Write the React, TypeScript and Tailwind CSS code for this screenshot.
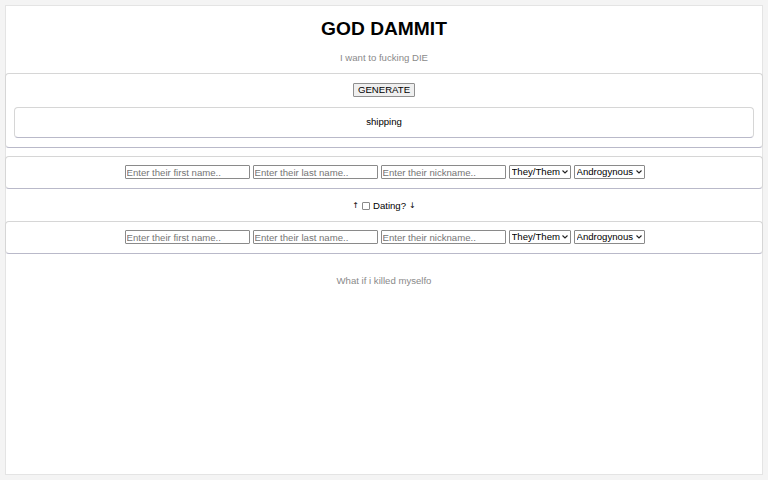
import React from "react";

function Select({ label, w }: { label: string; w: string }) {
  return (
    <span className={`relative inline-flex ${w}`}>
      <select className="appearance-none w-full h-[14px] border border-[#8a8a8a] rounded-[1px] bg-white text-[9.6px] leading-[12px] text-black pl-[2px] pr-[9px]">
        <option>{label}</option>
      </select>
      <svg
        className="pointer-events-none absolute right-[3px] top-[5px]"
        width="6"
        height="4"
        viewBox="0 0 6 4"
      >
        <path d="M0.5 0.5 L3 3 L5.5 0.5" fill="none" stroke="#222" strokeWidth="1.1" />
      </svg>
    </span>
  );
}

function PersonRow() {
  const inputCls =
    "w-[125px] h-[14px] border border-[#8a8a8a] rounded-[1px] bg-white px-[1px] text-[9.6px] leading-[12px] text-black placeholder:text-[#757575] outline-none";
  return (
    <div className="flex justify-center items-center gap-[3px] pl-[1px]">
      <input className={inputCls} placeholder="Enter their first name.." />
      <input className={inputCls} placeholder="Enter their last name.." />
      <input className={inputCls} placeholder="Enter their nickname.." />
      <Select label="They/Them" w="w-[62px]" />
      <Select label="Androgynous" w="w-[71px]" />
    </div>
  );
}

export default function App() {
  return (
    <div
      className="min-h-[480px] bg-[#f4f4f4] p-[5px]"
      style={{ fontFamily: '"Liberation Sans", Arial, sans-serif' }}
    >
      <div className="h-[470px] bg-white border border-[#e4e4e4] flex flex-col">
        <h1 className="mt-[11px] h-[24px] leading-[24px] text-center text-[19.2px] font-bold text-black">
          GOD DAMMIT
        </h1>
        <p className="mt-[11px] h-[12px] leading-[12px] text-center text-[9.6px] text-[#8a8a8a]">
          I want to fucking DIE
        </p>
        <div className="mt-[9px] -mx-px border border-[#d6d6d6] border-b-[#b9b9c9] rounded-[4px] px-[8px] pt-[9px] pb-[9px]">
          <div className="flex justify-center">
            <button className="h-[14px] px-[4px] border border-[#8f8f8f] bg-[#efefef] rounded-[1px] text-[9.6px] leading-[12px] text-black">
              GENERATE
            </button>
          </div>
          <div className="mt-[10px] h-[31px] border border-[#d6d6d6] border-b-[#b9b9c9] rounded-[4px] flex items-center justify-center text-[9.6px] text-black">
            shipping
          </div>
        </div>
        <div className="mt-[8px] -mx-px border border-[#d6d6d6] border-b-[#b9b9c9] rounded-[4px] pt-[8px] pb-[9px]">
          <PersonRow />
        </div>
        <div className="mt-[11px] h-[12px] leading-[12px] text-center text-[9.6px] text-black flex items-center justify-center gap-[3px]">
          <span className="text-[8px]" style={{ fontFamily: '"DejaVu Sans", sans-serif' }}>↑</span>
          <span className="inline-block w-[8px] h-[8px] border border-[#8a8a8a] rounded-[1px] bg-white" />
          <span>Dating?</span>
          <span className="text-[8px]" style={{ fontFamily: '"DejaVu Sans", sans-serif' }}>↓</span>
        </div>
        <div className="mt-[9px] -mx-px border border-[#d6d6d6] border-b-[#b9b9c9] rounded-[4px] pt-[8px] pb-[9px]">
          <PersonRow />
        </div>
        <p className="mt-[21px] h-[12px] leading-[12px] text-center text-[9.6px] text-[#8a8a8a]">
          What if i killed myselfo
        </p>
      </div>
    </div>
  );
}
